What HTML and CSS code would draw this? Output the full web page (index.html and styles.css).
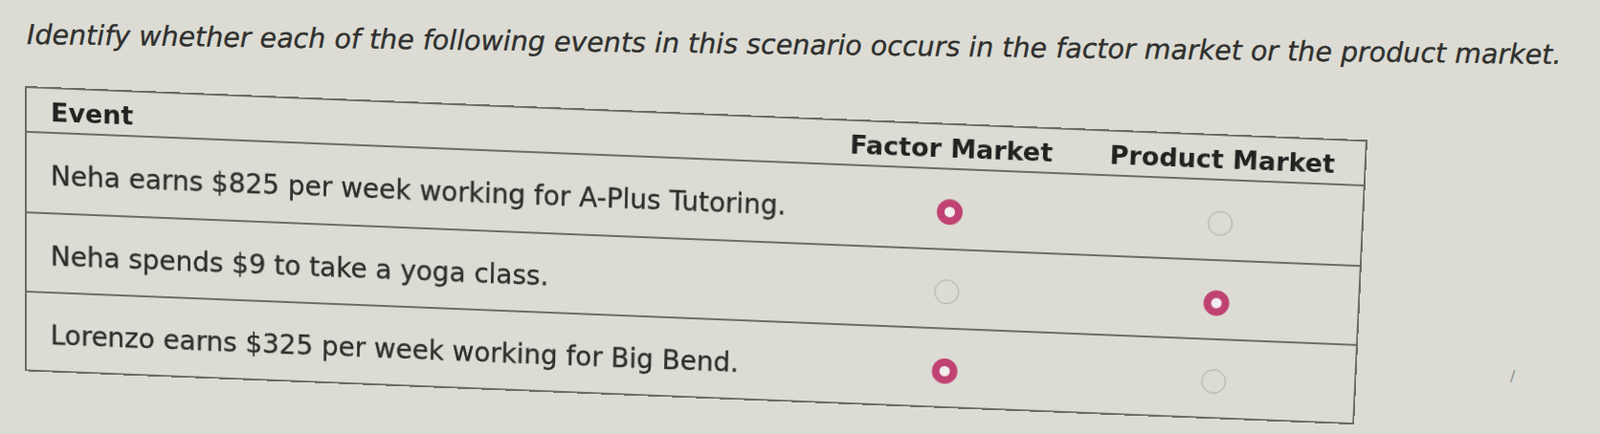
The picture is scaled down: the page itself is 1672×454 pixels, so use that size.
FILE: index.html
```html
<!DOCTYPE html>
<html lang="en">
<head>
<meta charset="utf-8">
<title>Factor or product market</title>
<link rel="stylesheet" href="styles.css">
</head>
<body>
<main class="page">
  <p class="prompt">Identify whether each of the following events in this scenario occurs in the factor market or the product market.</p>
  <div class="qtable">
    <div class="qrow qhead">
      <div class="cell event">Event</div>
      <div class="cell choice">Factor Market</div>
      <div class="cell choice">Product Market</div>
    </div>
    <div class="qrow">
      <div class="cell event">Neha earns $825 per week working for A-Plus Tutoring.</div>
      <div class="cell choice"><span class="radio on"></span></div>
      <div class="cell choice"><span class="radio"></span></div>
    </div>
    <div class="qrow">
      <div class="cell event">Neha spends $9 to take a yoga class.</div>
      <div class="cell choice"><span class="radio"></span></div>
      <div class="cell choice"><span class="radio on"></span></div>
    </div>
    <div class="qrow">
      <div class="cell event">Lorenzo earns $325 per week working for Big Bend.</div>
      <div class="cell choice"><span class="radio on"></span></div>
      <div class="cell choice"><span class="radio"></span></div>
    </div>
  </div>
  <span class="speck">/</span>
</main>
</body>
</html>
```

FILE: styles.css
```css
html, body {
  margin: 0;
  padding: 0;
  background: #dcdcd4;
}

.page {
  position: relative;
  width: 1672px;
  height: 454px;
  box-sizing: border-box;
  padding: 20px 0 0 28px;
  font-family: "DejaVu Sans", Verdana, sans-serif;
  color: #2c2c2a;
  overflow: hidden;
}

.prompt {
  margin: 0;
  font-size: 28.5px;
  font-style: italic;
  white-space: nowrap;
  color: #30302e;
  -webkit-text-stroke: 0.35px #30302e;
  transform-origin: 0 0;
  transform: skewY(0.75deg);
}

.qtable {
  margin: 37px 0 0 -2px;
  width: 1403px;
  box-sizing: border-box;
  border: 2px solid #6c6c66;
  transform-origin: 0 0;
  transform: skewY(2.3deg) perspective(2000px) rotateX(-3.8deg);
}

.qrow {
  display: grid;
  grid-template-columns: 832px 270px 1fr;
  align-items: center;
  height: 85px;
  box-sizing: border-box;
  padding-top: 6px;
  border-top: 2px solid #6c6c66;
  font-size: 28px;
  -webkit-text-stroke: 0.3px #2c2c2a;
}

.qrow + .qrow + .qrow {
  height: 84px;
}

.qhead {
  height: 45px;
  border-top: none;
  padding-top: 9px;
  align-items: start;
  font-size: 27px;
  font-weight: bold;
  color: #222221;
  -webkit-text-stroke: 0;
}

.cell.event {
  padding-left: 25px;
  white-space: nowrap;
}

.cell.choice {
  display: flex;
  justify-content: center;
  white-space: nowrap;
}

.radio {
  display: block;
  width: 26px;
  height: 26px;
  box-sizing: border-box;
  border-radius: 50%;
  border: 1.5px solid #aaaba4;
}

.radio.on {
  width: 27px;
  height: 27px;
  border: 8.5px solid #bf4272;
  background: #f2eeee;
}

.speck {
  position: absolute;
  left: 1578px;
  top: 384px;
  font-size: 16px;
  color: #8d8d88;
}
```
